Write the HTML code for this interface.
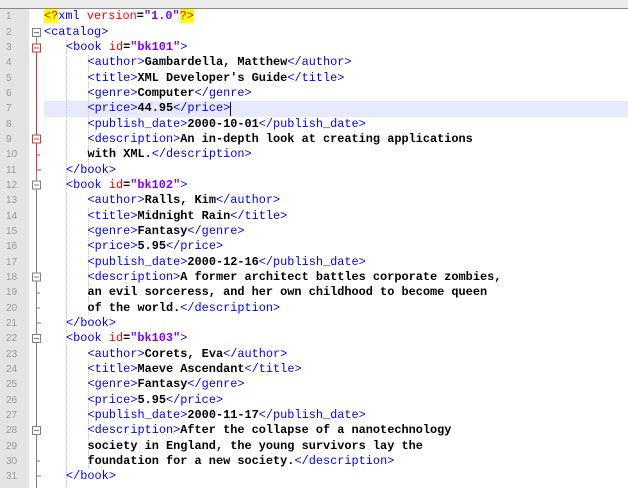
<!DOCTYPE html>
<html><head><style>
body{margin:0;width:628px;height:488px;overflow:hidden;background:#fff;position:relative;font-family:"Liberation Mono",monospace;}
#top{position:absolute;left:0;top:0;width:628px;height:8px;background:#ececec;border-bottom:1px solid #8a8a8a;}
#gut{position:absolute;left:0;top:9px;width:29px;height:479px;background:#e4e4e4;}
.ln{position:absolute;left:0;width:26px;height:15.33px;line-height:15.33px;font-size:10px;color:#9a9a9a;font-family:"Liberation Sans",sans-serif;padding-left:6px;}
.row{position:absolute;height:15.33px;line-height:15.33px;font-size:11.9px;white-space:pre;color:#000;font-weight:bold;}
.t{color:#0000ff;font-weight:normal}.a{color:#ff0000;font-weight:normal}.v{color:#8000ff;font-weight:bold}
.y{background:#ffff00;color:#ff0000;font-weight:normal}
#hl{position:absolute;left:44px;top:101.3px;width:584px;height:15.33px;background:#e8e8ff;}
</style></head><body>
<div id="top"></div><div id="gut"></div><div id="hl"></div>
<svg width="628" height="488" style="position:absolute;left:0;top:0">
<g stroke="#c8c8c8" stroke-dasharray="1,1">
<line x1="66.5" y1="40" x2="66.5" y2="488"/>
<line x1="88.5" y1="55" x2="88.5" y2="177"/>
<line x1="88.5" y1="208" x2="88.5" y2="315"/>
<line x1="88.5" y1="361" x2="88.5" y2="468"/>
</g>
<g fill="none" stroke-width="1">
<line x1="36.5" y1="28" x2="36.5" y2="488" stroke="#808080"/>
<line x1="36.5" y1="48" x2="36.5" y2="170" stroke="#e03030"/>
<line x1="36.5" y1="170" x2="41" y2="170" stroke="#e03030"/>
<line x1="36.5" y1="155" x2="40" y2="155" stroke="#e03030"/>
<line x1="36.5" y1="293" x2="40" y2="293" stroke="#808080"/>
<line x1="36.5" y1="308" x2="40" y2="308" stroke="#808080"/>
<line x1="36.5" y1="323" x2="41" y2="323" stroke="#808080"/>
<line x1="36.5" y1="461" x2="40" y2="461" stroke="#808080"/>
<line x1="36.5" y1="476" x2="41" y2="476" stroke="#808080"/>
</g>
<g stroke="#808080" fill="#fff">
<rect x="32.5" y="28.5" width="8" height="8"/><line x1="34" y1="32.5" x2="39" y2="32.5"/>
<rect x="32.5" y="181" width="8" height="8"/><line x1="34" y1="185" x2="39" y2="185"/>
<rect x="32.5" y="273" width="8" height="8"/><line x1="34" y1="277" x2="39" y2="277"/>
<rect x="32.5" y="334.5" width="8" height="8"/><line x1="34" y1="338.5" x2="39" y2="338.5"/>
<rect x="32.5" y="426.5" width="8" height="8"/><line x1="34" y1="430.5" x2="39" y2="430.5"/>
</g>
<g stroke="#e03030" fill="#fff">
<rect x="32.5" y="44" width="8" height="8"/><line x1="34" y1="48" x2="39" y2="48"/>
<rect x="32.5" y="135" width="8" height="8"/><line x1="34" y1="139" x2="39" y2="139"/>
</g>
<line x1="230.5" y1="102" x2="230.5" y2="116" stroke="#000"/>
</svg>
<div id="c"></div>
<script>
var L=[
[0,'<span class="y">&lt;?</span><span class="t">xml</span> <span class="a">version</span>=<span class="v">"1.0"</span><span class="y">?&gt;</span>'],
[0,'<span class="t">&lt;catalog&gt;</span>'],
[1,'<span class="t">&lt;book</span> <span class="a">id</span>=<span class="v">"bk101"</span><span class="t">&gt;</span>'],
[2,'<span class="t">&lt;author&gt;</span>Gambardella, Matthew<span class="t">&lt;/author&gt;</span>'],
[2,'<span class="t">&lt;title&gt;</span>XML Developer\'s Guide<span class="t">&lt;/title&gt;</span>'],
[2,'<span class="t">&lt;genre&gt;</span>Computer<span class="t">&lt;/genre&gt;</span>'],
[2,'<span class="t">&lt;price&gt;</span>44.95<span class="t">&lt;/price&gt;</span>'],
[2,'<span class="t">&lt;publish_date&gt;</span>2000-10-01<span class="t">&lt;/publish_date&gt;</span>'],
[2,'<span class="t">&lt;description&gt;</span>An in-depth look at creating applications'],
[2,'with XML.<span class="t">&lt;/description&gt;</span>'],
[1,'<span class="t">&lt;/book&gt;</span>'],
[1,'<span class="t">&lt;book</span> <span class="a">id</span>=<span class="v">"bk102"</span><span class="t">&gt;</span>'],
[2,'<span class="t">&lt;author&gt;</span>Ralls, Kim<span class="t">&lt;/author&gt;</span>'],
[2,'<span class="t">&lt;title&gt;</span>Midnight Rain<span class="t">&lt;/title&gt;</span>'],
[2,'<span class="t">&lt;genre&gt;</span>Fantasy<span class="t">&lt;/genre&gt;</span>'],
[2,'<span class="t">&lt;price&gt;</span>5.95<span class="t">&lt;/price&gt;</span>'],
[2,'<span class="t">&lt;publish_date&gt;</span>2000-12-16<span class="t">&lt;/publish_date&gt;</span>'],
[2,'<span class="t">&lt;description&gt;</span>A former architect battles corporate zombies,'],
[2,'an evil sorceress, and her own childhood to become queen'],
[2,'of the world.<span class="t">&lt;/description&gt;</span>'],
[1,'<span class="t">&lt;/book&gt;</span>'],
[1,'<span class="t">&lt;book</span> <span class="a">id</span>=<span class="v">"bk103"</span><span class="t">&gt;</span>'],
[2,'<span class="t">&lt;author&gt;</span>Corets, Eva<span class="t">&lt;/author&gt;</span>'],
[2,'<span class="t">&lt;title&gt;</span>Maeve Ascendant<span class="t">&lt;/title&gt;</span>'],
[2,'<span class="t">&lt;genre&gt;</span>Fantasy<span class="t">&lt;/genre&gt;</span>'],
[2,'<span class="t">&lt;price&gt;</span>5.95<span class="t">&lt;/price&gt;</span>'],
[2,'<span class="t">&lt;publish_date&gt;</span>2000-11-17<span class="t">&lt;/publish_date&gt;</span>'],
[2,'<span class="t">&lt;description&gt;</span>After the collapse of a nanotechnology'],
[2,'society in England, the young survivors lay the'],
[2,'foundation for a new society.<span class="t">&lt;/description&gt;</span>'],
[1,'<span class="t">&lt;/book&gt;</span>']];
var X=[44,66,87.5];
var h='';for(var i=0;i<L.length;i++){var t=(9.4+i*15.33).toFixed(2);
h+='<div class="ln" style="top:'+t+'px">'+(i+1)+'</div><div class="row" style="top:'+t+'px;left:'+X[L[i][0]]+'px">'+L[i][1]+'</div>';}
document.getElementById('c').innerHTML=h;
</script>
</body></html>
